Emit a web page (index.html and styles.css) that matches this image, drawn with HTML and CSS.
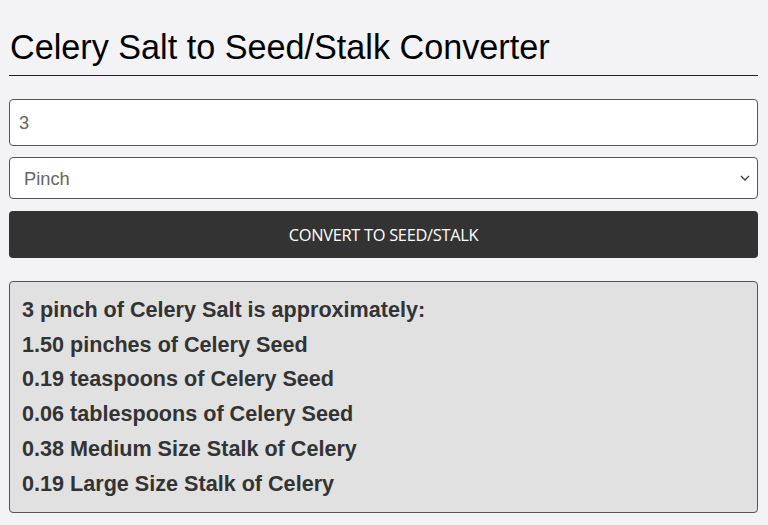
FILE: index.html
```html
<!DOCTYPE html>
<html lang="en">
<head>
<meta charset="utf-8">
<title>Celery Salt to Seed/Stalk Converter</title>
<link rel="stylesheet" href="styles.css">
</head>
<body>
<main class="converter">
  <h1 class="title">Celery Salt to Seed/Stalk Converter</h1>
  <form class="form">
    <input class="field amount" type="text" value="3">
    <div class="select-wrap">
      <select class="field unit">
        <option>Pinch</option>
      </select>
      <svg class="chevron" width="10" height="6" viewBox="0 0 10 6"><path d="M1 1l4 4 4-4" fill="none" stroke="#444" stroke-width="1.4"/></svg>
    </div>
    <button class="btn" type="button">Convert to Seed/Stalk</button>
  </form>
  <div class="result">
    <p>3 pinch of Celery Salt is approximately:</p>
    <p>1.50 pinches of Celery Seed</p>
    <p>0.19 teaspoons of Celery Seed</p>
    <p>0.06 tablespoons of Celery Seed</p>
    <p>0.38 Medium Size Stalk of Celery</p>
    <p>0.19 Large Size Stalk of Celery</p>
  </div>
</main>
</body>
</html>
```
FILE: styles.css
```css
html, body {
  margin: 0;
  padding: 0;
  background: #f3f3f5;
}
body {
  font-family: "Liberation Sans", Arial, sans-serif;
}
.converter {
  padding: 29px 10px 0 9px;
  display: flex;
  flex-direction: column;
}
.title {
  margin: 0;
  font-size: 34.2px;
  font-weight: normal;
  color: #000;
  line-height: 37px;
  padding-bottom: 9px;
  border-bottom: 1px solid #222;
  padding-left: 1px;
}
.form {
  margin-top: 23px;
  display: flex;
  flex-direction: column;
}
.field {
  box-sizing: border-box;
  width: 100%;
  font-family: "Liberation Sans", Arial, sans-serif;
  font-size: 18.3px;
  color: #666;
  background: #fff;
  border: 1px solid #555;
  border-radius: 4px;
  outline: none;
}
.amount {
  height: 47px;
  padding: 0 9px;
}
.select-wrap {
  position: relative;
  margin-top: 11px;
}
.unit {
  height: 42px;
  padding: 0 14px;
  appearance: none;
  -webkit-appearance: none;
}
.chevron {
  position: absolute;
  right: 8px;
  top: 18px;
  pointer-events: none;
}
.btn {
  margin-top: 12px;
  height: 47px;
  background: #333;
  color: #fff;
  border: none;
  border-radius: 4px;
  font-family: "Open Sans", sans-serif;
  font-size: 16.4px;
  text-transform: uppercase;
  letter-spacing: -0.3px;
}
.result {
  margin-top: 23px;
  background: #e1e1e1;
  border: 1px solid #555;
  border-radius: 4px;
  padding: 11px 12px;
  color: #333;
}
.result p {
  margin: 0;
  font-weight: bold;
  font-size: 21.6px;
  line-height: 34.7px;
}
```
